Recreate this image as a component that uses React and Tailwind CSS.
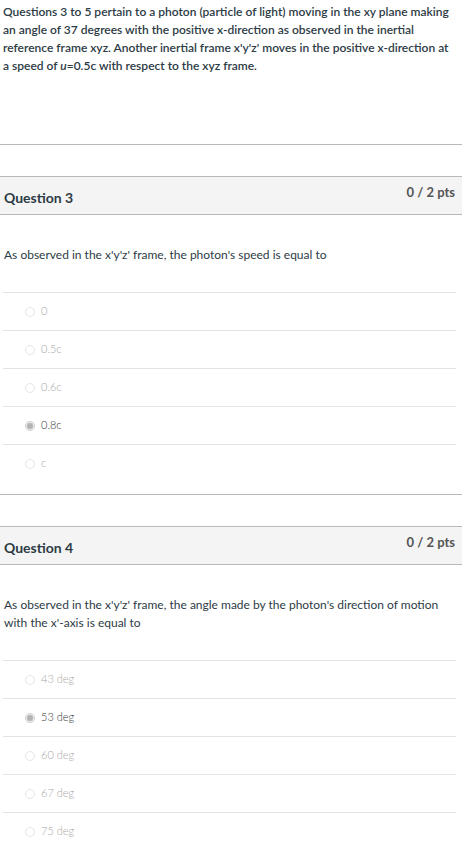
const questions = [
  {
    title: 'Question 3',
    text: "As observed in the x'y'z' frame, the photon's speed is equal to",
    options: ['0', '0.5c', '0.6c', '0.8c', 'c'],
    picked: 3,
  },
  {
    title: 'Question 4',
    text: "As observed in the x'y'z' frame, the angle made by the photon's direction of motion with the x'-axis is equal to",
    options: ['43 deg', '53 deg', '60 deg', '67 deg', '75 deg'],
    picked: 1,
  },
];

const Radio = ({ checked }) => (
  <span
    className={
      checked
        ? 'flex h-[10px] w-[10px] items-center justify-center rounded-full border border-[#cfcfcf] bg-[#ececec]'
        : 'h-[10px] w-[10px] rounded-full border border-[#e6e6e6] bg-white'
    }
  >
    {checked && <span className="h-[6px] w-[6px] rounded-full bg-[#b3b3b3]" />}
  </span>
);

const Question = ({ q }) => (
  <div>
    <div className="border-t border-[#b9b9b9]" />
    <div className="h-[31px]" />
    {/* header */}
    <div className="flex h-[39px] items-start justify-between border-y border-[#b9b9b9] bg-[#f4f4f4] pl-[4px] pr-[7px]">
      <span className="pt-[10px] text-[14px] font-bold text-[#2d3b45]">{q.title}</span>
      <span className="pt-[6px] text-[13px] font-bold text-[#555]">0 / 2 pts</span>
    </div>
    <p className="mt-[31px] pl-[4px] pr-[10px] text-[12px] leading-[18px] text-[#2d3b45]">{q.text}</p>
    <div className="mt-[28px] mr-[6px] ml-[3px]">
      {q.options.map((opt, i) => (
        <div key={opt} className="flex h-[38px] items-center gap-[6px] border-t border-[#e3e3e3] pl-[22px]">
          <Radio checked={i === q.picked} />
          <span className={i === q.picked ? 'text-[11px] font-light text-[#333]' : 'text-[11px] font-light text-[#a8a8a8]'}>
            {opt}
          </span>
        </div>
      ))}
    </div>
    <div className="h-[12px]" />
  </div>
);

export default function App() {
  return (
    <div className="min-h-[861px] bg-white font-['Lato','Open_Sans',sans-serif]">
      <p className="pl-[3px] pr-[8px] pt-[3px] text-[12px] font-semibold leading-[18px] text-[#2d3b45]">
        Questions 3 to 5 pertain to a photon (particle of light) moving in the xy plane making an angle of 37 degrees
        with the positive x-direction as observed in the inertial reference frame xyz. Another inertial frame x'y'z'
        moves in the positive x-direction at a speed of <span className="italic">u</span>=0.5c with respect to the xyz
        frame.
      </p>
      <div className="h-[69px]" />
      {questions.map((q) => (
        <Question key={q.title} q={q} />
      ))}
    </div>
  );
}
